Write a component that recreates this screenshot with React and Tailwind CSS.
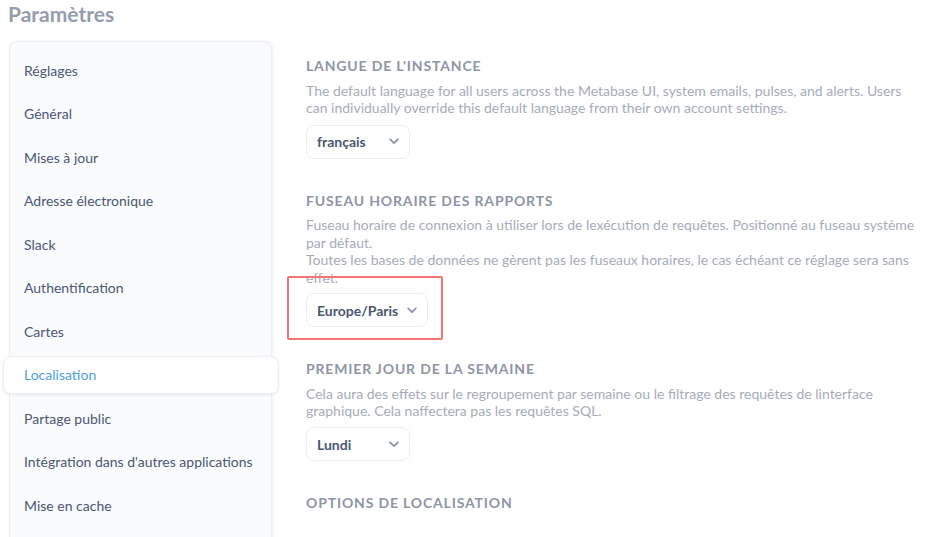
import React from "react";

const NAV = [
  "Réglages",
  "Général",
  "Mises à jour",
  "Adresse électronique",
  "Slack",
  "Authentification",
  "Cartes",
  "Localisation",
  "Partage public",
  "Intégration dans d'autres applications",
  "Mise en cache",
];

const ACTIVE = "Localisation";

function Chevron() {
  return (
    <svg width="10" height="7" viewBox="0 0 10 7" fill="none" className="shrink-0">
      <path d="M1.2 1.4 L5 5.2 L8.8 1.4" stroke="#8f96a8" strokeWidth="1.9" strokeLinecap="round" strokeLinejoin="round" />
    </svg>
  );
}

function Select({ value }) {
  return (
    <div className="inline-flex h-[34px] min-w-[104px] items-center justify-between gap-[9px] rounded-lg border border-[#eceef2] bg-white pl-[10px] pr-[10px] text-[14px] font-bold text-[#4c5773]">
      <span>{value}</span>
      <Chevron />
    </div>
  );
}

function Section({ title, children, last }) {
  return (
    <div className={last ? "" : "mb-[34px]"}>
      <div className="mb-[7.5px] text-[14px] font-bold uppercase leading-[16px] tracking-[0.06em] text-[#8e95a6]">
        {title}
      </div>
      {children}
    </div>
  );
}

function Desc({ children }) {
  return <p className="text-[14px] leading-[17.5px] text-[#a6acb9]">{children}</p>;
}

export default function App() {
  return (
    <div className="h-[537px] overflow-hidden bg-white" style={{ fontFamily: "Lato, 'Open Sans', sans-serif" }}>
      <h1 className="pl-[8px] pt-[1px] text-[21px] font-bold leading-[26px] text-[#959cac]">Paramètres</h1>
      <div className="mt-[14px] flex">
        {/* sidebar */}
        <div className="ml-[9px] w-[263px] shrink-0 rounded-t-lg border border-[#eceef1] bg-[#f9fbfc] pb-[30px] pt-[9px] shadow-[1px_0_3px_rgba(0,0,0,0.06)]">
          {NAV.map((item) =>
            item === ACTIVE ? (
              <div
                key={item}
                className="-ml-[7px] -mr-[8px] mb-[5.5px] flex h-[38px] items-center rounded-lg border border-[#eceef1] bg-white pl-[20px] text-[14px] text-[#509ee3] shadow-[0_1px_3px_rgba(0,0,0,0.08)]"
              >
                {item}
              </div>
            ) : (
              <div key={item} className="mb-[5.5px] flex h-[38px] items-center pl-[14px] text-[14px] text-[#4c5773]">
                {item}
              </div>
            )
          )}
        </div>

        {/* content */}
        <div className="ml-[34px] w-[614px] pt-[17px]">
          <Section title="Langue de l'instance">
            <Desc>
              The default language for all users across the Metabase UI, system emails, pulses, and alerts. Users can
              individually override this default language from their own account settings.
            </Desc>
            <div className="mt-[8px]">
              <Select value="français" />
            </div>
          </Section>

          <Section title="Fuseau horaire des rapports">
            <Desc>
              Fuseau horaire de connexion à utiliser lors de lexécution de requêtes. Positionné au fuseau système par
              défaut.
            </Desc>
            <Desc>
              Toutes les bases de données ne gèrent pas les fuseaux horaires, le cas échéant ce réglage sera sans effet.
            </Desc>
            <div className="relative mt-[7px]">
              <Select value="Europe/Paris" />
              <div className="pointer-events-none absolute -left-[19px] -top-[17px] h-[64px] w-[156px] rounded-[2px] border-2 border-[#f47373]" />
            </div>
          </Section>

          <Section title="Premier jour de la semaine">
            <Desc>
              Cela aura des effets sur le regroupement par semaine ou le filtrage des requêtes de linterface graphique.
              Cela naffectera pas les requêtes SQL.
            </Desc>
            <div className="mt-[7.5px]">
              <Select value="Lundi" />
            </div>
          </Section>

          <Section title="Options de localisation" last />
        </div>
      </div>
    </div>
  );
}
